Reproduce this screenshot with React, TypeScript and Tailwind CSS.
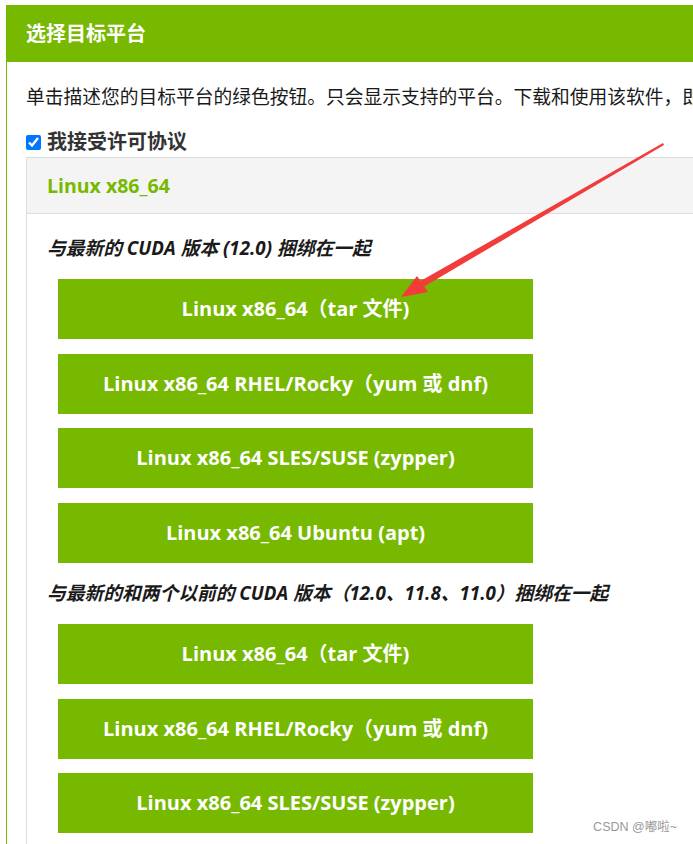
const FONT = "font-['Open_Sans','Noto_Sans_CJK_SC',sans-serif]";

const latest = [
  "Linux x86_64（tar 文件)",
  "Linux x86_64 RHEL/Rocky（yum 或 dnf)",
  "Linux x86_64 SLES/SUSE (zypper)",
  "Linux x86_64 Ubuntu (apt)",
];

const previous = [
  "Linux x86_64（tar 文件)",
  "Linux x86_64 RHEL/Rocky（yum 或 dnf)",
  "Linux x86_64 SLES/SUSE (zypper)",
];

function PlatformButton({ label }: { label: string }) {
  return (
    <button
      type="button"
      className="flex h-[60px] w-[475px] items-center justify-center bg-[#76b900] text-[20px] font-bold text-white"
    >
      {label}
    </button>
  );
}

function Section({ title, items }: { title: string; items: string[] }) {
  return (
    <div>
      <h3 className="pl-[20px] text-[18.75px] leading-[24px] font-bold italic text-[#1a1a1a]">
        {title}
      </h3>
      <div className="mt-[19px] flex flex-col gap-[14.7px] pl-[31px]">
        {items.map((label, i) => (
          <PlatformButton key={i} label={label} />
        ))}
      </div>
    </div>
  );
}

export default function App() {
  return (
    <div className={`relative h-[844px] w-[693px] overflow-hidden bg-white ${FONT}`}>
      <div className="pt-[5px] pl-[6px]">
        <div className="w-[900px] border-l border-[#76b900]">
          <div className="flex h-[57px] items-center bg-[#76b900] px-[19px] text-[20px] font-bold text-white">
            选择目标平台
          </div>

          <div className="pt-[21px] pl-[19px]">
            <p className="whitespace-nowrap text-[18.75px] leading-[28px] text-[#1a1a1a]">
              单击描述您的目标平台的绿色按钮。只会显示支持的平台。下载和使用该软件，即表示您同意完全遵守最终用户许可协议的条款和条件。
            </p>

            <label className="mt-[20px] flex h-[22px] items-center gap-[6px]">
              <input
                type="checkbox"
                defaultChecked
                className="h-[15px] w-[15px] accent-[#0075ff]"
              />
              <span className="text-[20px] font-bold text-[#333]">我接受许可协议</span>
            </label>

            <div className="mt-[4px] border border-[#dddddd]">
              <div className="flex h-[56px] items-center border-b border-[#dddddd] bg-[#f4f4f4] px-[20px] text-[19.5px] font-bold text-[#76b900]">
                Linux x86_64
              </div>
              <div className="pt-[22px] pb-[20px]">
                <Section title="与最新的 CUDA 版本 (12.0) 捆绑在一起" items={latest} />
                <div className="mt-[18px]">
                  <Section
                    title="与最新的和两个以前的 CUDA 版本（12.0、11.8、11.0）捆绑在一起"
                    items={previous}
                  />
                </div>
              </div>
            </div>
          </div>
        </div>
      </div>

      {/* annotation arrow */}
      <svg
        className="pointer-events-none absolute top-0 left-0"
        width="693"
        height="844"
        viewBox="0 0 693 844"
      >
        <polygon points="663,143 664,145 420,289 417,283" fill="#f23c3c" />
        <polygon points="401,297 417,276 428,292" fill="#f23c3c" />
      </svg>

      <div className="absolute right-[16px] bottom-[7px] font-['Liberation_Sans','Noto_Sans_CJK_SC',sans-serif] text-[12.5px] text-[#999]">
        CSDN @嘟啦~
      </div>
    </div>
  );
}
